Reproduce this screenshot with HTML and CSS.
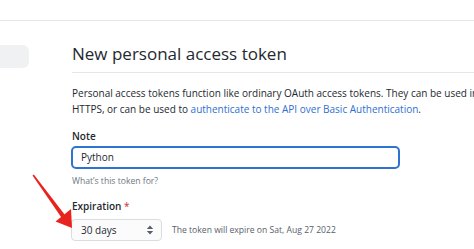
FILE: index.html
```html
<!DOCTYPE html>
<html lang="en">
<head>
<meta charset="utf-8">
<title>New personal access token</title>
<link rel="stylesheet" href="styles.css">
</head>
<body>
<div class="topbar"></div>
<div class="layout">
  <aside class="sidebar"><div class="side-item"></div></aside>
  <main class="content">
    <h2 class="title">New personal access token</h2>
    <p class="intro">Personal access tokens function like ordinary OAuth access tokens. They can be used instead of a password for Git over<br>HTTPS, or can be used to <a class="link" href="#">authenticate to the API over Basic Authentication</a>.</p>
    <div class="field">
      <label class="label" for="note">Note</label>
      <div class="input" id="note">Python</div>
      <p class="hint">What’s this token for?</p>
    </div>
    <div class="field field-exp">
      <label class="label">Expiration <span class="req">*</span></label>
      <div class="exp-row">
        <div class="select">
          <span>30 days</span>
          <svg class="caret" width="8" height="10" viewBox="0 0 8 10"><path d="M4 0.5 L7.2 4 H0.8 Z M4 9.5 L7.2 6 H0.8 Z" fill="#57606a"/></svg>
        </div>
        <span class="exp-note">The token will expire on Sat, Aug 27 2022</span>
      </div>
    </div>
  </main>
</div>
<svg class="arrow" width="474" height="249" viewBox="0 0 474 249">
  <polygon points="32.5,175.5 33.8,174.6 64.6,214.6 61.4,217.4" fill="#e8221f"/>
  <polygon points="55.5,221.5 71,209 72,228" fill="#e8221f"/>
</svg>
</body>
</html>
```
FILE: styles.css
```css
html, body {
  margin: 0;
  padding: 0;
  overflow: hidden;
  background: #ffffff;
}
body {
  font-family: "Open Sans", "Noto Sans", sans-serif;
  color: #24292f;
  position: relative;
  width: 474px;
  height: 249px;
}
.topbar {
  height: 20px;
  border-bottom: 1px solid #e4e6ea;
}
.layout {
  display: flex;
}
.sidebar {
  width: 29px;
  flex: none;
  padding-top: 24px;
}
.side-item {
  height: 23px;
  background: #f0f1f3;
  border-radius: 0 6px 6px 0;
}
.content {
  margin-left: 43px;
  flex: none;
  width: 600px;
}
.title {
  margin: 20px 0 0;
  font-size: 17px;
  font-weight: 400;
  line-height: 26px;
  padding-bottom: 5px;
  border-bottom: 1px solid #e4e6ea;
  white-space: nowrap;
}
.intro {
  margin: 12px 0 0;
  font-size: 10px;
  line-height: 16px;
  white-space: nowrap;
}
.link {
  color: #2f6fd0;
  text-decoration: none;
}
.field {
  margin-top: 11px;
}
.field-exp {
  margin-top: 10px;
}
.label {
  display: block;
  font-size: 10px;
  font-weight: 600;
  line-height: 16px;
}
.req {
  color: #d1242f;
  font-weight: 400;
}
.input {
  margin-top: 2px;
  width: 329px;
  height: 23px;
  box-sizing: border-box;
  border: 2px solid #2f73d0;
  border-radius: 5px;
  padding: 0 8px;
  font-size: 10px;
  line-height: 19px;
  margin-left: -1px;
}
.hint {
  margin: 5px 0 0;
  font-size: 8.6px;
  line-height: 14px;
  color: #6e7781;
}
.exp-row {
  display: flex;
  align-items: center;
  gap: 10px;
  margin-top: 5px;
}
.select {
  width: 91px;
  height: 22px;
  box-sizing: border-box;
  border: 1px solid #d9dde2;
  border-radius: 4px;
  background: #fbfbfc;
  display: flex;
  align-items: center;
  justify-content: space-between;
  padding: 0 7px 0 9px;
  font-size: 10px;
  margin-left: -1px;
}
.exp-note {
  font-size: 8.6px;
  color: #57606a;
}
.arrow {
  position: absolute;
  left: 0;
  top: 0;
  pointer-events: none;
}
```
